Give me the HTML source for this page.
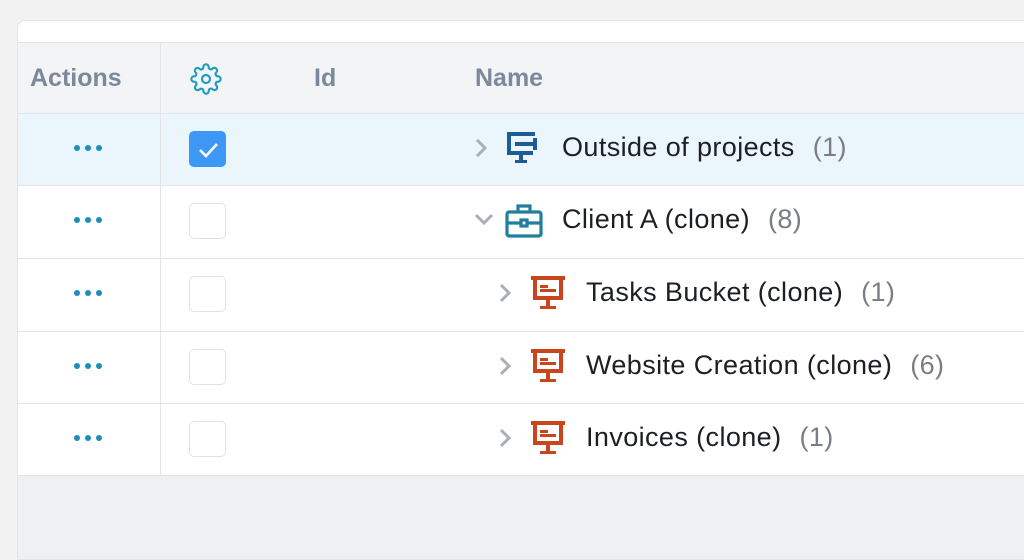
<!DOCTYPE html>
<html><head><meta charset="utf-8"><style>
*{margin:0;padding:0;box-sizing:border-box}
body{width:1024px;height:547px;background:#f2f2f3;font-family:"Liberation Sans",sans-serif;position:relative;overflow:hidden}
.card{position:absolute;left:17px;top:20px;width:1020px;height:540px;background:#eef0f2;border:1px solid #e3e5e8;border-radius:8px 0 0 0;overflow:hidden}
.top{position:absolute;left:0;top:0;right:0;height:22px;background:#fff;border-bottom:1px solid #e2e4e8}
.hdr{position:absolute;left:0;top:22px;right:0;height:71px;background:#f3f4f5;border-bottom:1px solid #e2e4e8}
.row{position:absolute;left:0;right:0;background:#fff;border-bottom:1px solid #e2e4e8}
.vl{position:absolute;left:142px;top:22px;width:1px;height:433px;background:#e2e4e8}
.h{position:absolute;top:20px;font-size:25px;color:#7c889b;font-weight:bold;line-height:30px}
.dots{position:absolute;left:56px;top:31px;width:30px;height:6px}
.dots i{position:absolute;top:0;width:6px;height:6px;border-radius:50%;background:#1a8fb8}
.cb{position:absolute;left:171px;top:17px;width:37px;height:36px;border:1px solid #dfe2e6;border-radius:5px;background:#fff}
.cb.on{background:#3d97f5;border-color:#3d97f5}
.t{position:absolute;top:17px;font-size:27px;letter-spacing:0.4px;color:#1c1f24;line-height:32px;white-space:nowrap}
.t span{color:#7a7d82;margin-left:18px}
.ch{position:absolute;top:20px}
.ic{position:absolute;top:15px}
</style></head><body>
<div class="card">
<div class="top"></div>
<div class="hdr">
<div class="h" style="left:12px">Actions</div>
<svg style="position:absolute;left:172px;top:20px" width="32" height="32" viewBox="0 0 24 24" fill="none" stroke="#1f9bbf" stroke-width="1.6"><circle cx="12" cy="12" r="3"/><path d="M19.4 15a1.650 1.65 0 0 0 .33 1.820l.06.06a2 2 0 1 1-2.83 2.83l-.06-.06a1.65 1.65 0 0 0-1.82-.33 1.65 1.65 0 0 0-1 1.51V21a2 2 0 1 1-4 0v-.09A1.65 1.65 0 0 0 9 19.4a1.65 1.65 0 0 0-1.82.33l-.06.06a2 2 0 1 1-2.830-2.83l.06-.06A1.65 1.65 0 0 0 4.68 15a1.65 1.65 0 0 0-1.51-1H3a2 2 0 1 1 0-4h.09A1.65 1.65 0 0 0 4.6 9a1.65 1.65 0 0 0-.33-1.82l-.06-.06a2 2 0 1 1 2.83-2.83l.06.06A1.65 1.65 0 0 0 9 4.68a1.65 1.65 0 0 0 1-1.51V3a2 2 0 1 1 4 0v.09a1.65 1.65 0 0 0 1 1.51 1.65 1.65 0 0 0 1.82-.33l.06-.06a2 2 0 1 1 2.83 2.83l-.06.06A1.65 1.65 0 0 0 19.4 9a1.65 1.65 0 0 0 1.51 1H21a2 2 0 1 1 0 4h-.09a1.65 1.65 0 0 0-1.51 1z"/></svg>
<div class="h" style="left:296px">Id</div>
<div class="h" style="left:457px">Name</div>
</div>

<div class="row" style="top:93px;height:72px;background:#eaf5fc">
<div class="dots"><i style="left:0"></i><i style="left:11px"></i><i style="left:22px"></i></div>
<div class="cb on"><svg width="37" height="36" viewBox="0 0 37 36"><path d="M10 18l6 6 11-12" fill="none" stroke="#fff" stroke-width="2.6"/></svg></div>
<svg class="ch" style="left:455px" width="16" height="28" viewBox="0 0 16 28"><path d="M4 6l8 8-8 8" fill="none" stroke="#a9afb8" stroke-width="3"/></svg>
<svg class="ic" style="left:487px" width="38" height="38" viewBox="0 0 38 38" fill="#1d5c94"><rect x="2" y="3" width="28" height="4"/><rect x="2" y="3" width="4" height="23"/><rect x="2" y="22" width="26" height="4"/><rect x="10" y="13" width="22" height="4"/><rect x="28" y="9" width="4" height="12"/><rect x="14" y="26" width="4" height="7"/><rect x="10" y="31" width="12" height="3"/></svg>
<div class="t" style="left:544px">Outside of projects<span>(1)</span></div>
</div>

<div class="row" style="top:165px;height:73px">
<div class="dots"><i style="left:0"></i><i style="left:11px"></i><i style="left:22px"></i></div>
<div class="cb"></div>
<svg class="ch" style="left:454px" width="24" height="28" viewBox="0 0 24 28"><path d="M4 9l8 8 8-8" fill="none" stroke="#a9afb8" stroke-width="3"/></svg>
<svg class="ic" style="left:486px" width="40" height="40" viewBox="0 0 40 40" fill="none" stroke="#1f7f9c" stroke-width="3.2"><rect x="3" y="11" width="34" height="24" rx="2"/><path d="M14 11V5h12v6M3 22h34"/><rect x="17" y="19" width="6" height="6" fill="#fff"/></svg>
<div class="t" style="left:544px">Client A (clone)<span>(8)</span></div>
</div>

<div class="row" style="top:238px;height:73px">
<div class="dots"><i style="left:0"></i><i style="left:11px"></i><i style="left:22px"></i></div>
<div class="cb"></div>
<svg class="ch" style="left:479px" width="16" height="28" viewBox="0 0 16 28"><path d="M4 6l8 8-8 8" fill="none" stroke="#a9afb8" stroke-width="3"/></svg>
<svg class="ic" style="left:511px" width="38" height="40" viewBox="0 0 38 40"><g fill="#c8451e"><rect x="2" y="2" width="34" height="4"/><rect x="4" y="2" width="4" height="24"/><rect x="30" y="2" width="4" height="24"/><rect x="4" y="22" width="30" height="4"/><rect x="11" y="11" width="8" height="3"/><rect x="11" y="15" width="16" height="3"/><rect x="17" y="26" width="4" height="8"/><rect x="11" y="32" width="16" height="3"/></g></svg>
<div class="t" style="left:568px">Tasks Bucket (clone)<span>(1)</span></div>
</div>

<div class="row" style="top:311px;height:72px">
<div class="dots"><i style="left:0"></i><i style="left:11px"></i><i style="left:22px"></i></div>
<div class="cb"></div>
<svg class="ch" style="left:479px" width="16" height="28" viewBox="0 0 16 28"><path d="M4 6l8 8-8 8" fill="none" stroke="#a9afb8" stroke-width="3"/></svg>
<svg class="ic" style="left:511px" width="38" height="40" viewBox="0 0 38 40"><g fill="#c8451e"><rect x="2" y="2" width="34" height="4"/><rect x="4" y="2" width="4" height="24"/><rect x="30" y="2" width="4" height="24"/><rect x="4" y="22" width="30" height="4"/><rect x="11" y="11" width="8" height="3"/><rect x="11" y="15" width="16" height="3"/><rect x="17" y="26" width="4" height="8"/><rect x="11" y="32" width="16" height="3"/></g></svg>
<div class="t" style="left:568px">Website Creation (clone)<span>(6)</span></div>
</div>

<div class="row" style="top:383px;height:72px">
<div class="dots"><i style="left:0"></i><i style="left:11px"></i><i style="left:22px"></i></div>
<div class="cb"></div>
<svg class="ch" style="left:479px" width="16" height="28" viewBox="0 0 16 28"><path d="M4 6l8 8-8 8" fill="none" stroke="#a9afb8" stroke-width="3"/></svg>
<svg class="ic" style="left:511px" width="38" height="40" viewBox="0 0 38 40"><g fill="#c8451e"><rect x="2" y="2" width="34" height="4"/><rect x="4" y="2" width="4" height="24"/><rect x="30" y="2" width="4" height="24"/><rect x="4" y="22" width="30" height="4"/><rect x="11" y="11" width="8" height="3"/><rect x="11" y="15" width="16" height="3"/><rect x="17" y="26" width="4" height="8"/><rect x="11" y="32" width="16" height="3"/></g></svg>
<div class="t" style="left:568px">Invoices (clone)<span>(1)</span></div>
</div>

<div class="vl"></div>
</div>
</body></html>
